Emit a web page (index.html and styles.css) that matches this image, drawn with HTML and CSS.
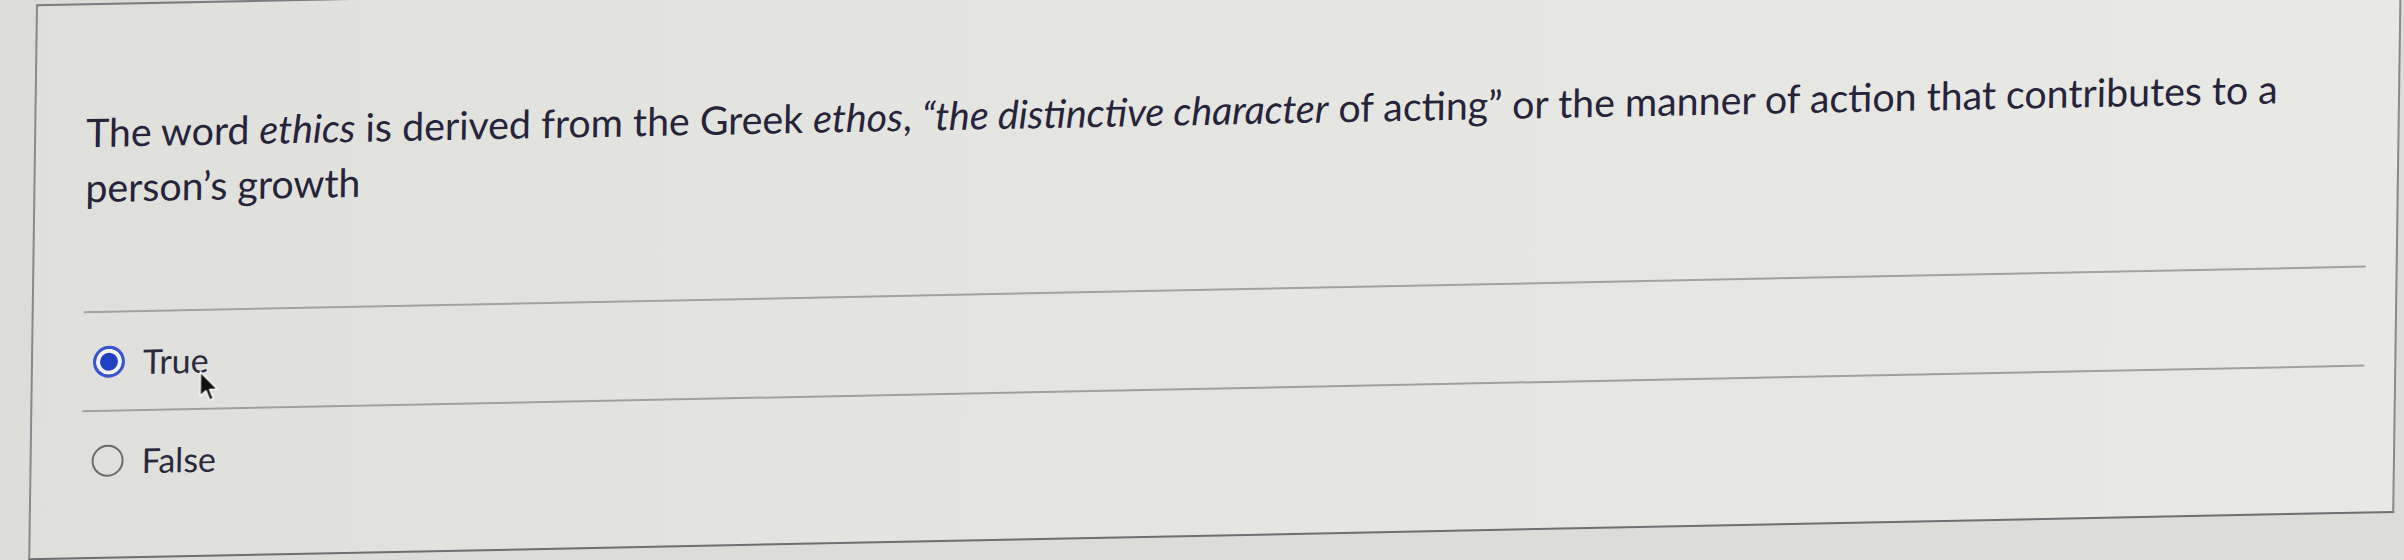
FILE: index.html
```html
<!DOCTYPE html>
<html lang="en">
<head>
<meta charset="utf-8">
<title>Question</title>
<link rel="stylesheet" href="styles.css">
</head>
<body>
<div class="photo">
  <section class="card">
    <p class="question">The word <em>ethics</em> is derived from the Greek <em>ethos</em>, <em>“the distinctive character</em> of acting” or the manner of action that contributes to a person’s growth</p>
    <ul class="options">
      <li class="option"><span class="radio checked"></span><span class="label">True</span></li>
      <li class="option"><span class="radio"></span><span class="label">False</span></li>
    </ul>
    <svg class="cursor" viewBox="0 0 20 31" width="21" height="33" aria-hidden="true">
      <path d="M1.5 1.5 L1.5 25 L7 19.8 L10.8 28.8 L14.3 27.3 L10.6 18.6 L18 18.6 Z" fill="#111" stroke="#f4f4f4" stroke-width="1.6" stroke-linejoin="round"/>
    </svg>
  </section>
</div>
</body>
</html>
```
FILE: styles.css
```css
html, body {
  margin: 0;
  padding: 0;
  width: 2404px;
  height: 560px;
  overflow: hidden;
  background: #dcdcd8;
}

.photo {
  width: 2404px;
  height: 560px;
  transform-origin: 0 0;
  transform: matrix(1, -0.02, -0.014, 1, 0, 0);
  font-family: Lato, "Liberation Sans", sans-serif;
}

.card {
  position: relative;
  box-sizing: border-box;
  margin: 5px 0 0 36px;
  width: 2366px;
  height: 556px;
  padding: 99px 30px 0 50px;
  border-top: 2px solid #7c7c80;
  border-left: 2px solid #88888e;
  border-right: 2px solid #8a8a8e;
  border-bottom: 2px solid #6f6f72;
  background: linear-gradient(90deg, #dfdfdb 0%, #e4e4e0 40%, #e8e8e5 100%);
}

.question {
  margin: 0 0 97px 0;
  font-size: 39.3px;
  line-height: 55px;
  color: #26233a;
}

.question em {
  font-style: italic;
}

.options {
  list-style: none;
  margin: 0;
  padding: 0;
  border-top: 2px solid #a2a2a2;
}

.option {
  display: flex;
  align-items: center;
  gap: 18px;
  height: 97px;
  padding-left: 10px;
}

.option + .option {
  border-top: 2px solid #a0a0a0;
  height: 98px;
}

.radio {
  box-sizing: border-box;
  width: 32px;
  height: 32px;
  border-radius: 50%;
  border: 2.5px solid #6a6a6c;
  flex: none;
}

.radio.checked {
  border: 3px solid #3a56cd;
  background: #2140c2;
  box-shadow: inset 0 0 0 4px #f3f3f7;
}

.label {
  font-size: 34px;
  line-height: 42px;
  color: #2b293e;
}

.cursor {
  position: absolute;
  left: 166px;
  top: 367px;
  filter: blur(0.4px);
}
```
